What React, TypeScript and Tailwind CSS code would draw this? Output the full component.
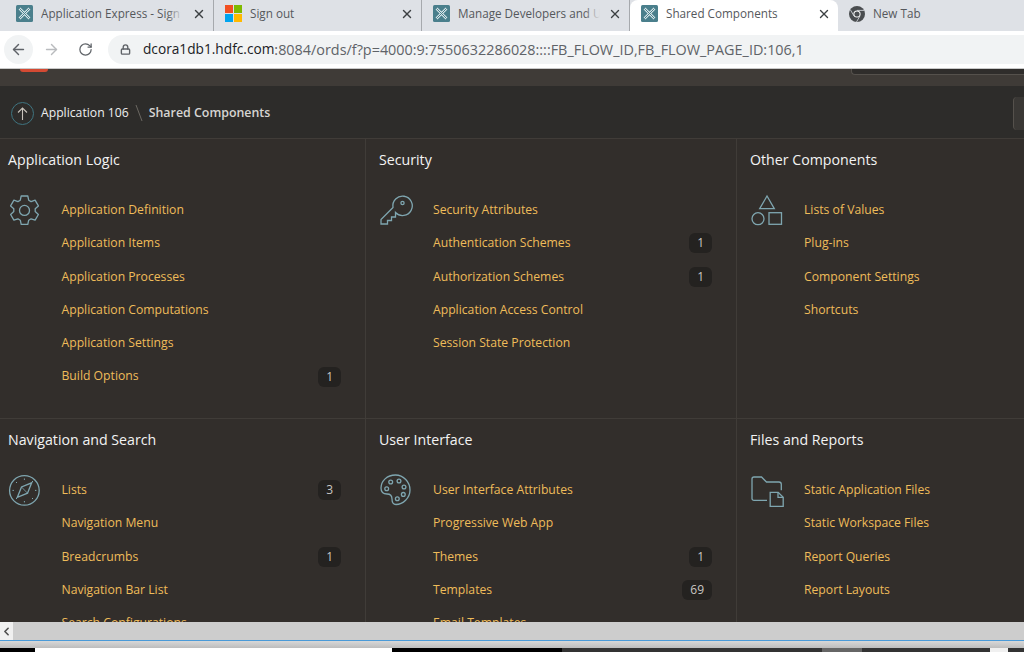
import { ArrowLeft, ArrowRight, ChevronLeft, Lock, RotateCw, X } from 'lucide-react';

const font = "font-['Open_Sans',sans-serif]";

type Item = { label: string; badge?: number };
type Section = { title: string; icon: React.ReactNode; items: Item[] };

const ApexIcon = () => (
  <svg width="17" height="17" viewBox="0 0 17 17" className="shrink-0">
    <rect width="17" height="17" rx="1.5" fill="#4a7f8c" />
    <path d="M3.5 13.5 13.5 3.5M3.5 3.5l10 10" stroke="#d5e4e7" strokeWidth="2.6" />
    <path d="M3.5 13.5 13.5 3.5M3.5 3.5l10 10" stroke="#4a7f8c" strokeWidth="1" />
  </svg>
);

const MsIcon = () => (
  <svg width="17" height="17" viewBox="0 0 17 17" className="shrink-0">
    <rect width="8" height="8" fill="#f25022" />
    <rect x="9" width="8" height="8" fill="#7fba00" />
    <rect y="9" width="8" height="8" fill="#00a4ef" />
    <rect x="9" y="9" width="8" height="8" fill="#ffb900" />
  </svg>
);

const ChromeIcon = () => (
  <svg width="16" height="16" viewBox="0 0 16 16" className="shrink-0">
    <circle cx="8" cy="8" r="8" fill="#4a4d50" />
    <circle cx="8" cy="8" r="3.6" fill="#fff" />
    <circle cx="8" cy="8" r="2.6" fill="#4a4d50" />
    <path d="M8 4.4h7M5 10 1.5 4M10.8 10.2 7.5 16" stroke="#dee1e6" strokeWidth="0.8" />
  </svg>
);

const iconProps = {
  fill: 'none',
  stroke: '#7fa6b0',
  strokeWidth: 1.3,
  className: 'overflow-visible',
};

const GearIcon = () => (
  <svg width="32" height="32" viewBox="0 0 32 32" {...iconProps} strokeLinejoin="round">
    <path d="M13.2 2h6.6l.9 4.2 2.4 1.4 4-1.4 3.3 5.7-3.2 2.9v2.8l3.2 2.9-3.3 5.700-4-1.400-2.400 1.400-.9 4.200h-6.600l-.9-4.200-2.400-1.400-4 1.400-3.300-5.700 3.200-2.900v-2.800L2.600 11.900l3.300-5.700 4 1.400 2.400-1.400z" />
    <circle cx="16.5" cy="16.4" r="5" />
  </svg>
);

const KeyIcon = () => (
  <svg width="32" height="32" viewBox="0 0 32 32" {...iconProps}>
    <path d="M14 13.500 2 25.500V30h6.500v-3.500h4V23h4v-4.500A9.700 9.700 0 1 0 14 13.500Z" />
    <circle cx="23.500" cy="9" r="1.600" />
  </svg>
);

const ShapesIcon = () => (
  <svg width="32" height="32" viewBox="0 0 32 32" {...iconProps}>
    <path d="M17 2 9.700 14.700h14.600Z" />
    <circle cx="8" cy="24.700" r="6" />
    <rect x="19" y="18.700" width="12.500" height="11.600" />
  </svg>
);

const CompassIcon = () => (
  <svg width="32" height="32" viewBox="0 0 32 32" {...iconProps}>
    <circle cx="16.400" cy="16.400" r="14.800" />
    <path d="M23.700 8.800 19.500 19.200 9.300 23.400 13.500 13Z" />
    <path d="M13.500 13 19.500 19.200" strokeWidth="0.8" />
    <path d="M16.400 4.500v1.400M16.400 27v1.400M4.500 16.400h1.400M27 16.400h1.400M8 8l1 1M24 24l1 1M8 25l1-1M24 8l1-1" strokeWidth="1" />
  </svg>
);

const PaletteIcon = () => (
  <svg width="32" height="32" viewBox="0 0 32 32" {...iconProps}>
    <path d="M17 30.500c7 0 14-6.500 14-14.500S24.500 1 16.500 1C8 1 2 7 2 14c0 4.500 2.500 6 6 6s5 1.500 5 5 1 5.500 4 5.500Z" />
    <circle cx="7.700" cy="14.700" r="1.900" />
    <circle cx="11.700" cy="8" r="1.900" />
    <circle cx="20" cy="7" r="1.900" />
    <circle cx="25" cy="13" r="1.900" />
    <circle cx="24.300" cy="20.400" r="1.900" />
    <circle cx="18.300" cy="24.700" r="1.900" />
  </svg>
);

const FolderIcon = () => (
  <svg width="32" height="32" viewBox="0 0 32 32" {...iconProps}>
    <path d="M17 26.400H4a2 2 0 0 1-2-2V5a2 2 0 0 1 2-2h7.500l5 5H29a2.300 2.300 0 0 1 2.300 2.300v6" />
    <path d="M20.200 18.300h8l5 5v9h-13Z" />
    <path d="M28 18.300v5h5.200" />
  </svg>
);

const sections: Section[] = [
  {
    title: 'Application Logic',
    icon: <GearIcon />,
    items: [
      { label: 'Application Definition' },
      { label: 'Application Items' },
      { label: 'Application Processes' },
      { label: 'Application Computations' },
      { label: 'Application Settings' },
      { label: 'Build Options', badge: 1 },
    ],
  },
  {
    title: 'Security',
    icon: <KeyIcon />,
    items: [
      { label: 'Security Attributes' },
      { label: 'Authentication Schemes', badge: 1 },
      { label: 'Authorization Schemes', badge: 1 },
      { label: 'Application Access Control' },
      { label: 'Session State Protection' },
    ],
  },
  {
    title: 'Other Components',
    icon: <ShapesIcon />,
    items: [
      { label: 'Lists of Values' },
      { label: 'Plug-ins' },
      { label: 'Component Settings' },
      { label: 'Shortcuts' },
    ],
  },
  {
    title: 'Navigation and Search',
    icon: <CompassIcon />,
    items: [
      { label: 'Lists', badge: 3 },
      { label: 'Navigation Menu' },
      { label: 'Breadcrumbs', badge: 1 },
      { label: 'Navigation Bar List' },
      { label: 'Search Configurations' },
    ],
  },
  {
    title: 'User Interface',
    icon: <PaletteIcon />,
    items: [
      { label: 'User Interface Attributes' },
      { label: 'Progressive Web App' },
      { label: 'Themes', badge: 1 },
      { label: 'Templates', badge: 69 },
      { label: 'Email Templates' },
    ],
  },
  {
    title: 'Files and Reports',
    icon: <FolderIcon />,
    items: [
      { label: 'Static Application Files' },
      { label: 'Static Workspace Files' },
      { label: 'Report Queries' },
      { label: 'Report Layouts' },
    ],
  },
];

const Tab = ({ icon, title, active, last, first }: { icon: React.ReactNode; title: string; active?: boolean; last?: boolean; first?: boolean }) => (
  <div className={`flex h-[31px] shrink-0 items-center pb-1 pr-[7px] ${first ? 'w-[214px] pl-4' : 'w-[208px] pl-[11px]'} ${active ? 'rounded-t-lg bg-white' : ''} ${last || active ? '' : 'border-r border-[#a6a9ad]'}`}>
    {icon}
    <span className="relative ml-2 w-[142px] overflow-hidden whitespace-nowrap text-[11.700px] text-[#55585c]">
      {title}
      {!active && !last && <span className="absolute inset-y-0 right-0 w-4 bg-gradient-to-r from-transparent to-[#dee1e6]" />}
    </span>
    {!last && <X size={14} strokeWidth={2.4} className="ml-auto text-[#3c4043]" />}
  </div>
);

const SectionBlock = ({ section, index }: { section: Section; index: number }) => {
  const first = index % 3 === 0;
  const last = index % 3 === 2;
  return (
    <div className={`h-[280px] overflow-hidden ${first ? 'pl-2 pr-[24px]' : 'pl-[13px]'} ${index === 1 || index === 4 ? 'pr-[24px]' : ''} ${last ? '' : 'border-r border-[#403c38]'} ${index < 3 ? 'border-b border-[#403c38]' : ''}`}>
      <h2 className="mt-[10px] h-[22px] text-[14.200px]/[22px] font-medium text-[#f3f3f3]">{section.title}</h2>
      <div className="mt-[22.500px] flex">
        <div className={`shrink-0 ${first ? 'w-[53.500px]' : 'w-[54px]'}`}>{section.icon}</div>
        <ul className="min-w-0 flex-1">
          {section.items.map((item) => (
            <li key={item.label} className="flex h-[33.300px] items-center justify-between text-[12.200px] text-[#efbc5a]">
              <span>{item.label}</span>
              {item.badge !== undefined && (
                <span className="flex h-5 min-w-[22px] items-center justify-center rounded-md bg-[#242220] px-2 text-xs text-[#c9c7c4]">{item.badge}</span>
              )}
            </li>
          ))}
        </ul>
      </div>
    </div>
  );
};

export default function App() {
  return (
    <div className={`flex h-[652px] w-[1024px] flex-col overflow-hidden bg-white ${font}`}>
      {/* browser tabs */}
      <div className="flex h-[31px] shrink-0 bg-[#dee1e6]">
        <Tab icon={<ApexIcon />} title="Application Express - Sign" first />
        <Tab icon={<MsIcon />} title="Sign out" />
        <Tab icon={<ApexIcon />} title="Manage Developers and Users" />
        <Tab icon={<ApexIcon />} title="Shared Components" active />
        <Tab icon={<ChromeIcon />} title="New Tab" last />
      </div>

      {/* address bar */}
      <div className="flex h-[38px] shrink-0 items-center border-b border-[#c9c9c9] bg-white pl-1">
        <div className="flex h-[29px] w-[29px] items-center justify-center rounded-full bg-[#f1f3f4]">
          <ArrowLeft size={17} strokeWidth={2} className="text-[#5f6368]" />
        </div>
        <ArrowRight size={17} strokeWidth={2} className="ml-[10px] text-[#b9bbbe]" />
        <RotateCw size={15} strokeWidth={2} className="ml-[18px] text-[#5f6368]" />
        <div className="ml-[15px] flex h-[29px] flex-1 items-center rounded-l-full bg-[#f1f3f4] pl-3">
          <Lock size={11} strokeWidth={3} className="text-[#5f6368]" />
          <span className="ml-[12px] whitespace-nowrap text-[13.700px] text-[#202124]">dcora1db1.hdfc.com</span>
          <span className="whitespace-nowrap text-[14.400px] text-[#5f6368]">:8084/ords/f?p=4000:9:7550632286028::::FB_FLOW_ID,FB_FLOW_PAGE_ID:106,1</span>
        </div>
      </div>

      {/* apex header */}
      <div className="flex h-[17px] shrink-0 items-start justify-between bg-[#3f3b37] pl-5">
        <div className="h-[3px] w-7 rounded-b-md bg-[#d44a33]" />
        <div className="h-[6px] w-[173px] rounded-bl border-b border-l border-[#55514c] bg-[#2f2d2b]" />
      </div>

      {/* breadcrumb */}
      <div className="flex h-[53px] shrink-0 items-center justify-between border-b border-[#403c38] bg-[#2d2c2a] pl-[11px]">
        <div className="flex items-center pt-[2px] text-[12.200px]">
          <div className="flex h-[23px] w-[23px] items-center justify-center rounded-full border border-[#3f7480]">
            <svg width="11" height="13" viewBox="0 0 11 13" fill="none" stroke="#c9c4bc" strokeWidth="1.100">
              <path d="M5.500 13V1M1 5.500l4.500-4.500 4.500 4.500" />
            </svg>
          </div>
          <span className="ml-[7px] text-[#efefef]">Application 106</span>
          <svg width="8" height="18" viewBox="0 0 8 18" className="mx-[6px]" fill="none" stroke="#6b6862">
            <path d="M1 1l6 16" />
          </svg>
          <span className="text-[12.400px] font-semibold text-[#d6d5d2]">Shared Components</span>
        </div>
        <div className="mt-[3px] h-[33px] w-[11px] rounded-l-sm border-l border-[#55514c] bg-[#3a3835]" />
      </div>

      {/* shared components grid */}
      <div className="grid min-h-0 flex-1 grid-cols-[366px_371px_287px] overflow-hidden bg-[#322e2b]">
        {sections.map((section, i) => (
          <SectionBlock key={section.title} section={section} index={i} />
        ))}
      </div>

      {/* horizontal scrollbar */}
      <div className="h-[18px] shrink-0 bg-[#cdcdcd]">
        <div className="flex h-full w-[13px] items-center justify-center bg-[#f0f0f0]">
          <ChevronLeft size={13} strokeWidth={3} className="text-[#505050]" />
        </div>
      </div>

      {/* bottom of the captured desktop */}
      <div className="h-px shrink-0 bg-[#4a9ad8]" />
      <div className="h-[7px] shrink-0 bg-gradient-to-b from-[#d8d8d8] to-[#bdbdbd]" />
      <div className="flex h-1 shrink-0 bg-black">
        <div className="ml-[35px] w-[357px] bg-white" />
        <div className="ml-[170px] w-[260px] bg-[#333333]" />
        <div className="w-10 bg-[#666666]" />
        <div className="w-[128px] bg-[#333333]" />
        <div className="w-[18px] bg-[#f0f0f0]" />
        <div className="flex-1 bg-[#333333]" />
      </div>
    </div>
  );
}
